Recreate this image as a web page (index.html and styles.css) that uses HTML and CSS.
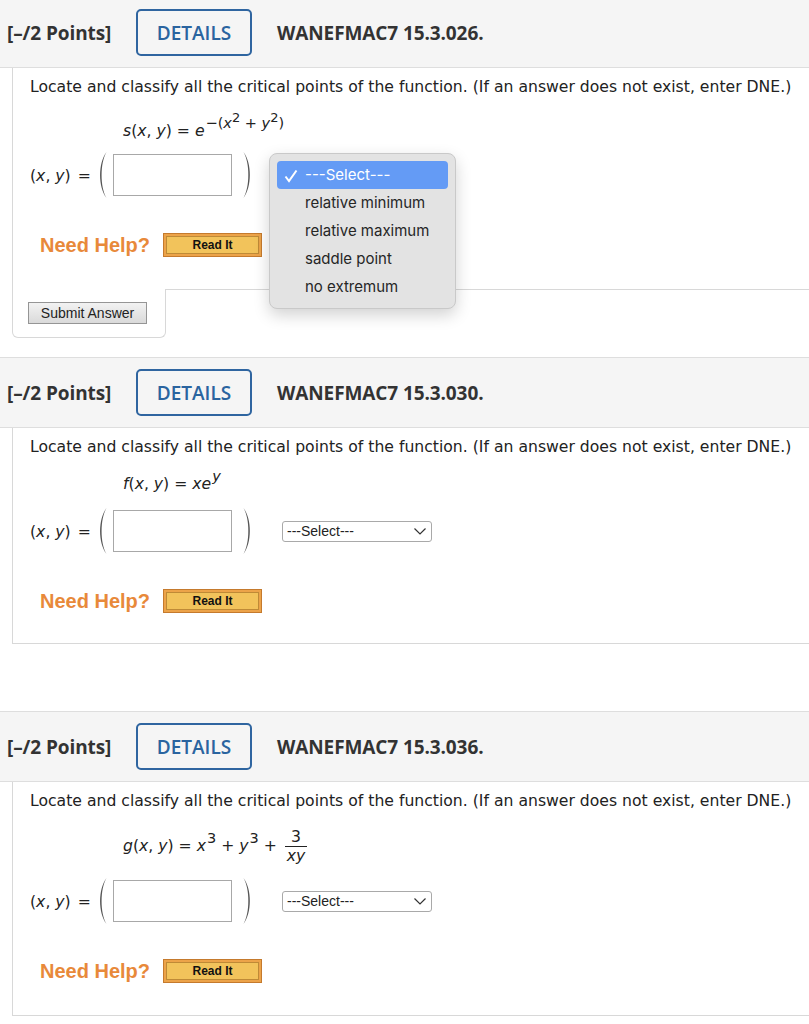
FILE: index.html
```html
<!DOCTYPE html>
<html lang="en">
<head>
<meta charset="utf-8">
<title>WebAssign</title>
<link rel="stylesheet" href="styles.css">
</head>
<body>

<section class="q q-first">
  <header class="q-head">
    <span class="pts">[–/2 Points]</span>
    <button class="details" type="button">DETAILS</button>
    <span class="qid">WANEFMAC7 15.3.026.</span>
  </header>
  <div class="q-body">
    <p class="prompt">Locate and classify all the critical points of the function. (If an answer does not exist, enter DNE.)</p>
    <div class="formula f1"><i>s</i>(<i>x</i>, <i>y</i>) = <i>e</i><sup class="sup">−(<i>x</i><sup class="sup2">2</sup> + <i>y</i><sup class="sup2">2</sup>)</sup></div>
    <div class="answer-row">
      <span class="lbl">(<i>x</i>, <i>y</i>)<span class="eq">=</span></span>
      <svg class="paren paren-l" viewBox="0 0 12 48" width="12" height="48"><path d="M10.5 1 C2 12 2 36 10.5 47 C4 36 4 12 10.5 1Z"/></svg>
      <span class="box"></span>
      <svg class="paren paren-r" viewBox="0 0 12 48" width="12" height="48"><path d="M1.5 1 C10 12 10 36 1.5 47 C8 36 8 12 1.5 1Z"/></svg>
      <div class="select-wrap">
        <div class="select">---Select---<svg class="chev" viewBox="0 0 12 7" width="12" height="7"><path d="M0.5 0.5 L6 6 L11.5 0.5"/></svg></div>
        <ul class="menu">
          <li class="menu-item selected"><svg class="check" viewBox="0 0 14 14" width="14" height="14"><path d="M1.5 7.5 L5 12 L12.5 1.5"/></svg>---Select---</li>
          <li class="menu-item">relative minimum</li>
          <li class="menu-item">relative maximum</li>
          <li class="menu-item">saddle point</li>
          <li class="menu-item">no extremum</li>
        </ul>
      </div>
    </div>
    <div class="help">
      <span class="need">Need Help?</span>
      <button class="read-it" type="button"><span>Read It</span></button>
    </div>
  </div>
  <div class="submit-tab"><button class="submit" type="button">Submit Answer</button></div>
</section>

<section class="q q-second">
  <header class="q-head">
    <span class="pts">[–/2 Points]</span>
    <button class="details" type="button">DETAILS</button>
    <span class="qid">WANEFMAC7 15.3.030.</span>
  </header>
  <div class="q-body">
    <p class="prompt">Locate and classify all the critical points of the function. (If an answer does not exist, enter DNE.)</p>
    <div class="formula f2"><i>f</i>(<i>x</i>, <i>y</i>) = <i>xe</i><sup class="sup"><i>y</i></sup></div>
    <div class="answer-row">
      <span class="lbl">(<i>x</i>, <i>y</i>)<span class="eq">=</span></span>
      <svg class="paren paren-l" viewBox="0 0 12 48" width="12" height="48"><path d="M10.5 1 C2 12 2 36 10.5 47 C4 36 4 12 10.5 1Z"/></svg>
      <span class="box"></span>
      <svg class="paren paren-r" viewBox="0 0 12 48" width="12" height="48"><path d="M1.5 1 C10 12 10 36 1.5 47 C8 36 8 12 1.5 1Z"/></svg>
      <div class="select-wrap">
        <div class="select">---Select---<svg class="chev" viewBox="0 0 12 7" width="12" height="7"><path d="M0.5 0.5 L6 6 L11.5 0.5"/></svg></div>
      </div>
    </div>
    <div class="help">
      <span class="need">Need Help?</span>
      <button class="read-it" type="button"><span>Read It</span></button>
    </div>
  </div>
</section>

<section class="q q-third">
  <header class="q-head">
    <span class="pts">[–/2 Points]</span>
    <button class="details" type="button">DETAILS</button>
    <span class="qid">WANEFMAC7 15.3.036.</span>
  </header>
  <div class="q-body">
    <p class="prompt">Locate and classify all the critical points of the function. (If an answer does not exist, enter DNE.)</p>
    <div class="formula f3"><i>g</i>(<i>x</i>, <i>y</i>) = <i>x</i><sup class="sup">3</sup> + <i>y</i><sup class="sup">3</sup> + <span class="frac"><span class="num">3</span><span class="den"><i>xy</i></span></span></div>
    <div class="answer-row">
      <span class="lbl">(<i>x</i>, <i>y</i>)<span class="eq">=</span></span>
      <svg class="paren paren-l" viewBox="0 0 12 48" width="12" height="48"><path d="M10.5 1 C2 12 2 36 10.5 47 C4 36 4 12 10.5 1Z"/></svg>
      <span class="box"></span>
      <svg class="paren paren-r" viewBox="0 0 12 48" width="12" height="48"><path d="M1.5 1 C10 12 10 36 1.5 47 C8 36 8 12 1.5 1Z"/></svg>
      <div class="select-wrap">
        <div class="select">---Select---<svg class="chev" viewBox="0 0 12 7" width="12" height="7"><path d="M0.5 0.5 L6 6 L11.5 0.5"/></svg></div>
      </div>
    </div>
    <div class="help">
      <span class="need">Need Help?</span>
      <button class="read-it" type="button"><span>Read It</span></button>
    </div>
  </div>
</section>

</body>
</html>
```

FILE: styles.css
```css
html, body {
  margin: 0;
  padding: 0;
  background: #ffffff;
}

body {
  font-family: "DejaVu Sans", Verdana, sans-serif;
  color: #222222;
}

.q-first { margin-top: -3px; }
.q-second { margin-top: 19px; }
.q-third { margin-top: 67px; }

/* header band */
.q-head {
  display: flex;
  align-items: center;
  height: 69px;
  padding-left: 7px;
  background: #f5f5f5;
  border-top: 1px solid #dedede;
  border-bottom: 1px solid #dedede;
  font-family: "Open Sans", "DejaVu Sans", sans-serif;
  font-weight: 700;
  font-size: 19px;
  letter-spacing: -0.1px;
  color: #333333;
}

.pts {
  display: block;
  width: 103px;
  white-space: nowrap;
}

.details {
  box-sizing: border-box;
  width: 116px;
  height: 47px;
  margin-left: 26px;
  padding: 0;
  background: transparent;
  border: 2px solid #2f65a0;
  border-radius: 5px;
  font-family: "Open Sans", "DejaVu Sans", sans-serif;
  font-weight: 600;
  font-size: 19px;
  color: #2a649f;
}

.qid {
  margin-left: 25px;
}

/* body */
.q-body {
  margin-left: 12px;
  padding: 10px 0 32px 17px;
  border-left: 1px solid #d8d8d8;
  border-bottom: 1px solid #d8d8d8;
}

.q-second .q-body { padding-bottom: 30px; }

.prompt {
  margin: 0;
  font-size: 15.65px;
  line-height: 18px;
  white-space: nowrap;
}

.formula {
  margin-left: 93px;
  font-size: 15.65px;
  line-height: 24px;
  height: 24px;
  white-space: nowrap;
}

.f1 { margin-top: 22px; }
.f2 { margin-top: 16px; }
.f3 { margin-top: 13px; height: 45px; line-height: 45px; }

.sup {
  font-size: 14.5px;
  line-height: 0;
  vertical-align: 8px;
  margin-left: 1px;
}

.sup2 {
  font-size: 13px;
  line-height: 0;
  vertical-align: 6px;
}

.frac {
  display: inline-flex;
  flex-direction: column;
  align-items: center;
  vertical-align: middle;
  line-height: 18px;
  margin-left: 3px;
}

.num {
  padding: 0 2px;
}

.den {
  padding: 0 2px;
  border-top: 1px solid #222222;
}

/* answer row */
.answer-row {
  display: flex;
  align-items: center;
  height: 48px;
  margin-top: 9px;
  font-size: 15.65px;
}

.f2 + .answer-row { margin-top: 11px; }

.lbl {
  display: block;
  width: 62px;
  white-space: nowrap;
}

.eq {
  margin-left: 7px;
}

.paren {
  display: block;
  fill: #555555;
}

.paren-l { margin-left: 4px; }
.paren-r { margin-left: 10px; }

.box {
  display: block;
  box-sizing: border-box;
  width: 119px;
  height: 42px;
  margin-left: 5px;
  border: 1px solid #a8a8a8;
  background: #ffffff;
}

.select-wrap {
  position: relative;
  margin-left: 28px;
}

.select {
  box-sizing: border-box;
  display: flex;
  align-items: center;
  width: 150px;
  height: 21px;
  padding-left: 4px;
  border: 1px solid #a9a9a9;
  border-radius: 3px;
  background: #ffffff;
  font-family: "Liberation Sans", Arial, sans-serif;
  font-size: 14px;
  color: #222222;
}

.chev {
  margin-left: auto;
  margin-right: 5px;
  fill: none;
  stroke: #333333;
  stroke-width: 1.2;
}

/* open dropdown menu (overlay) */
.menu {
  position: absolute;
  left: -13px;
  top: -12px;
  z-index: 10;
  box-sizing: border-box;
  width: 187px;
  margin: 0;
  padding: 7px;
  list-style: none;
  background: #e3e3e3;
  border: 1px solid #c9c9c9;
  border-radius: 8px;
  box-shadow: 0 6px 16px rgba(0, 0, 0, 0.18);
  font-family: Inter, "Open Sans", sans-serif;
  font-size: 15px;
  color: #262626;
}

.menu-item {
  position: relative;
  height: 28px;
  line-height: 28px;
  padding-left: 28px;
  border-radius: 4px;
  white-space: nowrap;
}

.menu-item.selected {
  background: #649bf5;
  color: #ffffff;
}

.check {
  position: absolute;
  left: 7px;
  top: 8px;
  fill: none;
  stroke: #ffffff;
  stroke-width: 2;
}

/* need help */
.help {
  display: flex;
  align-items: center;
  margin-top: 34px;
  padding-left: 10px;
}

.need {
  font-family: "Liberation Sans", Arial, sans-serif;
  font-weight: 700;
  font-size: 20px;
  color: #e8893a;
}

.read-it {
  box-sizing: border-box;
  width: 99px;
  height: 24px;
  margin-left: 13px;
  padding: 2px;
  background: #eca349;
  border: 1px solid #c57a2d;
  border-radius: 0;
}

.read-it span {
  display: block;
  height: 16px;
  line-height: 16px;
  background: #f2c35b;
  border: 1px solid #bf8a36;
  font-family: "Liberation Sans", Arial, sans-serif;
  font-weight: 700;
  font-size: 12px;
  color: #111111;
  text-align: center;
}

/* submit tab */
.submit-tab {
  box-sizing: border-box;
  width: 154px;
  margin-left: 12px;
  margin-top: -1px;
  padding: 13px 0 13px 15px;
  background: #ffffff;
  border: 1px solid #d8d8d8;
  border-top: none;
  border-radius: 0 0 6px 6px;
}

.submit {
  box-sizing: border-box;
  display: block;
  width: 119px;
  height: 22px;
  padding: 0;
  border: 1px solid #959595;
  border-radius: 0;
  background: linear-gradient(#f2f2f2, #dadada);
  font-family: "Liberation Sans", Arial, sans-serif;
  font-size: 14px;
  color: #222222;
}
```
